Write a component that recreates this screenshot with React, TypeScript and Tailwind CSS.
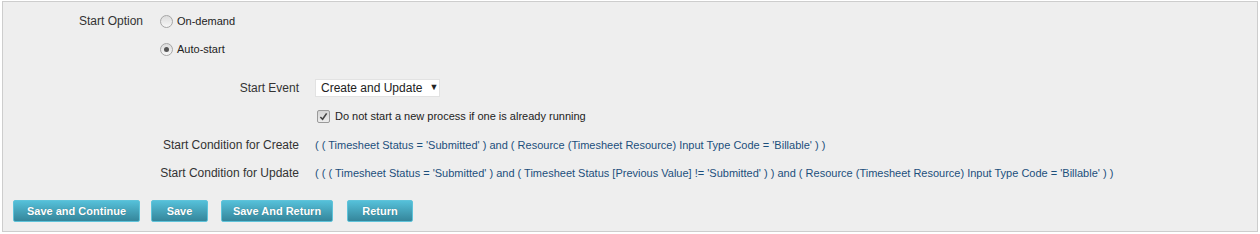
const conditions = [
    {
        label: 'Start Condition for Create',
        value: "( ( Timesheet Status = 'Submitted' ) and ( Resource (Timesheet Resource) Input Type Code = 'Billable' ) )",
        mt: 'mt-[11px]',
    },
    {
        label: 'Start Condition for Update',
        value: "( ( ( Timesheet Status = 'Submitted' ) and ( Timesheet Status [Previous Value] != 'Submitted' ) ) and ( Resource (Timesheet Resource) Input Type Code = 'Billable' ) )",
        mt: 'mt-[10px]',
    },
];

const buttons = [
    { label: 'Save and Continue', width: 'w-[127px]' },
    { label: 'Save', width: 'w-[57px] ml-[11px]' },
    { label: 'Save And Return', width: 'w-[112px] ml-[13px]' },
    { label: 'Return', width: 'w-[66px] ml-[14px]' },
];

const Radio = ({ checked, label }: { checked?: boolean; label: string }) => (
    <div className="flex items-center">
        <span className="flex h-[13px] w-[13px] items-center justify-center rounded-full border border-[#a6a6a6] bg-gradient-to-b from-[#dcdcdc] to-[#f7f7f7]">
            {checked && <span className="h-[5px] w-[5px] rounded-full bg-[#555]" />}
        </span>
        <span className="ml-[4px] text-[11px] text-[#222]">{label}</span>
    </div>
);

const App = () => {
    return (
        <div className="h-[234px] w-[1260px] bg-white pt-[1px] font-['Liberation_Sans',Arial,sans-serif]">
            <div className="ml-[2px] flex h-[231px] w-[1256px] flex-col border border-[#cdcdcd] bg-[#eeeeee]">
                <div className="mt-[10px] flex h-[18px] items-center">
                    <div className="w-[140px] text-right text-[12px] text-[#333]">Start Option</div>
                    <div className="ml-[17px]">
                        <Radio label="On-demand" />
                    </div>
                </div>
                <div className="mt-[10px] flex h-[18px] items-center">
                    <div className="ml-[157px]">
                        <Radio checked label="Auto-start" />
                    </div>
                </div>

                <div className="mt-[21px] flex h-[18px] items-center">
                    <div className="w-[296px] text-right text-[12px] text-[#333]">Start Event</div>
                    <div className="ml-[16px] flex h-[18px] w-[125px] items-center border border-[#e2e2e2] bg-white pl-[5px] text-[12px] text-[#222]">
                        Create and Update
                        <span className="ml-[7px] text-[9px]">▼</span>
                    </div>
                </div>
                <div className="mt-[10px] flex h-[18px] items-center pl-[314px]">
                    <span className="flex h-[13px] w-[13px] items-center justify-center rounded-[2px] border border-[#9a9a9a] bg-gradient-to-b from-[#d4d4d4] to-[#ededed]">
                        <svg viewBox="0 0 10 10" className="h-[9px] w-[9px]">
                            <path d="M1.5 5.5 L4 8 L8.5 1.5" fill="none" stroke="#444" strokeWidth="1.8" />
                        </svg>
                    </span>
                    <span className="ml-[5px] text-[11px] text-[#222]">Do not start a new process if one is already running</span>
                </div>

                {conditions.map(({ label, value, mt }) => (
                    <div key={label} className={`${mt} flex h-[18px] items-center`}>
                        <div className="w-[296px] text-right text-[12px] text-[#333]">{label}</div>
                        <div className="ml-[16px] whitespace-pre text-[11px] text-[#1c4f7c]">{value}</div>
                    </div>
                ))}

                <div className="mt-[18px] flex h-[22px] pl-[10px]">
                    {buttons.map(({ label, width }) => (
                        <button
                            key={label}
                            className={`${width} flex h-[22px] items-center justify-center rounded-[2px] border border-[#5fc3da] bg-gradient-to-b from-[#55c0d9] to-[#35869b] text-[11px] font-bold text-white [text-shadow:0_0_1px_rgba(0,0,0,0.3)]`}
                        >
                            {label}
                        </button>
                    ))}
                </div>
            </div>
        </div>
    );
};

export default App;
